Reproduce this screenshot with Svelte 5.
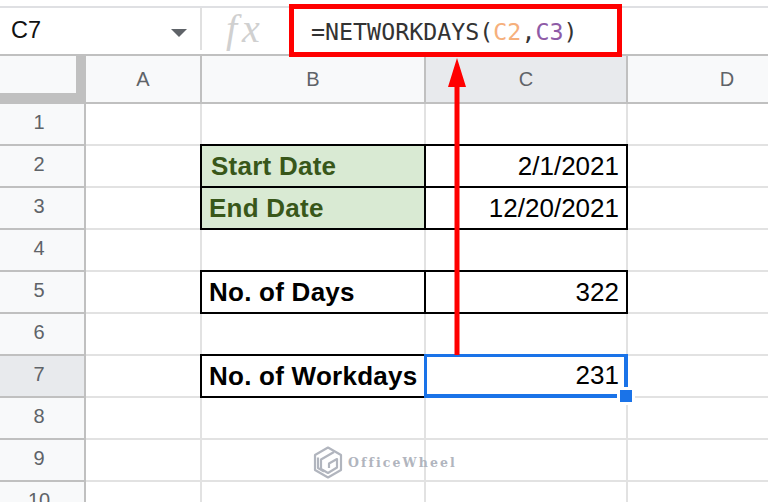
<script>
    const columns = ["A", "B", "C", "D"];

    const rows = [
        {n: 1},
        {n: 2, label: "Start Date", value: "2/1/2021", green: true, indent: true},
        {n: 3, label: "End Date", value: "12/20/2021", green: true},
        {n: 4},
        {n: 5, label: "No. of Days", value: "322"},
        {n: 6},
        {n: 7, label: "No. of Workdays", value: "231", active: true},
        {n: 8},
        {n: 9},
        {n: 10},
    ];
</script>

<div class="sheet">
    <div class="topline"></div>
    <div class="formula-bar">
        <div class="name-box">
            <span>C7</span>
            <i class="caret"></i>
        </div>
        <div class="fx">fx</div>
        <div class="formula">=NETWORKDAYS(<span class="ref1">C2</span>,<span class="ref2">C3</span>)</div>
    </div>

    <div class="grid">
        <div class="corner"></div>
        {#each columns as col}
            <div class="col-head" class:on={col === "C"}>{col}</div>
        {/each}

        {#each rows as row}
            <div class="row-head" class:on={row.active}>{row.n}</div>
            <div class="cell"></div>
            <div class="cell text" class:box={row.label} class:green={row.green} class:indent={row.indent}>{row.label ?? ""}</div>
            <div class="cell num" class:box={row.value} class:active={row.active}>
                {row.value ?? ""}
                {#if row.active}<i class="handle"></i>{/if}
            </div>
            <div class="cell last"></div>
        {/each}
    </div>

    <!-- annotation on top of the sheet -->
    <div class="red-box"></div>
    <svg class="arrow" width="20" height="298" viewBox="0 0 20 298">
        <path d="M10 0L19 29H12.500V297H7.500V29H1Z" fill="#ff0000"/>
    </svg>

    <div class="watermark">
        <svg width="30" height="33" viewBox="0 0 30 33" fill="none" stroke="#b1b5be" stroke-width="2.200" stroke-linejoin="round">
            <path d="M15 1.500L28 9V24L15 31.500L2 24V9Z"/>
            <path d="M21 6L8 13.500V23L15 27L24 21.500V13L16 17.500V22"/>
            <path d="M5 11.500V22L11 25.500"/>
        </svg>
        <span>OfficeWheel</span>
    </div>
</div>

<style>
    :global(body) {
        background: #fff;
        overflow: hidden;
    }

    .sheet {
        position: relative;
        width: 768px;
        height: 502px;
        overflow: hidden;
        font-family: "Liberation Sans", Arial, sans-serif;
        color: #000;
    }

    .topline {
        height: 2px;
        margin-top: 6px;
        background: #dfe0e3;
    }

    .formula-bar {
        display: flex;
        height: 48px;
        box-sizing: border-box;
        border-bottom: 2px solid #c0c0c0;
    }

    .name-box {
        display: flex;
        align-items: center;
        justify-content: space-between;
        box-sizing: border-box;
        width: 202px;
        height: 42px;
        padding: 2px 13px 0 11px;
        border-right: 2px solid #e0e0e0;
        font-size: 23.5px;
        color: #111;
    }

    .caret {
        width: 0;
        height: 0;
        border-left: 8px solid transparent;
        border-right: 8px solid transparent;
        border-top: 8px solid #5f6368;
        margin-top: 5px;
    }

    .fx {
        width: 87px;
        padding-left: 24px;
        box-sizing: border-box;
        font-family: "Liberation Serif", serif;
        font-style: italic;
        font-size: 40px;
        letter-spacing: 5px;
        line-height: 42px;
        color: #d0d0d0;
    }

    .formula {
        padding-left: 22px;
        font-family: "DejaVu Sans Mono", monospace;
        font-size: 23.3px;
        line-height: 48px;
        color: #333;
        white-space: pre;
    }

    .ref1 {
        color: #f6b07c;
    }

    .ref2 {
        color: #8e5ba6;
    }

    .grid {
        display: grid;
        grid-template-columns: 86px 116px 224px 202px 200px;
        grid-template-rows: 48px;
        grid-auto-rows: 42px;
    }

    .grid > * {
        box-sizing: border-box;
    }

    .corner {
        background: #f8f9fa;
        border-right: 10px solid #c0c0c0;
        border-bottom: 11px solid #c0c0c0;
    }

    .col-head {
        display: flex;
        align-items: center;
        justify-content: center;
        background: #f8f9fa;
        border-right: 2px solid #c0c0c0;
        border-bottom: 2px solid #c0c0c0;
        font-size: 20px;
        color: #5f6368;
    }

    .col-head.on, .row-head.on {
        background: #e8eaed;
    }

    .row-head {
        display: flex;
        align-items: center;
        justify-content: center;
        padding: 0 6px 3px 0;
        background: #f8f9fa;
        border-right: 2px solid #c0c0c0;
        border-bottom: 2px solid #c0c0c0;
        font-size: 20px;
        color: #5f6368;
    }

    .cell {
        display: flex;
        align-items: center;
        border-right: 2px solid #e2e2e2;
        border-bottom: 2px solid #e2e2e2;
        font-size: 26px;
        white-space: nowrap;
    }

    .text {
        padding-left: 7px;
        font-weight: bold;
        letter-spacing: 0.25px;
    }

    .indent {
        padding-left: 9px;
    }

    .num {
        position: relative;
        justify-content: flex-end;
        padding-right: 7px;
    }

    .box {
        border-color: #000;
        box-shadow: -2px 0 0 #000, 0 -2px 0 #000, -2px -2px 0 #000;
    }

    .green {
        background: #d9ead3;
        color: #38571a;
    }

    .active {
        z-index: 1;
        padding-right: 5px;
        border-right-width: 4px;
        border-bottom-width: 4px;
        border-color: #1a73e8;
        box-shadow: inset 1px 1px 0 #1a73e8, -2px 0 0 #1a73e8, 0 -2px 0 #1a73e8, -2px -2px 0 #1a73e8;
    }

    .handle {
        position: absolute;
        right: -8px;
        bottom: -8px;
        width: 12px;
        height: 12px;
        background: #1a73e8;
        outline: 3px solid #fff;
    }

    .red-box {
        position: absolute;
        z-index: 2;
        left: 289px;
        top: 4px;
        width: 333px;
        height: 53px;
        box-sizing: border-box;
        border: 5px solid #ff0000;
    }

    .arrow {
        position: absolute;
        z-index: 2;
        left: 447px;
        top: 58px;
    }

    .watermark {
        position: absolute;
        left: 313px;
        top: 446px;
        display: flex;
        align-items: center;
        gap: 5px;
        font-family: "DejaVu Serif", serif;
        font-weight: 600;
        font-size: 12.5px;
        letter-spacing: 2.1px;
        color: #b1b5be;
    }
</style>
